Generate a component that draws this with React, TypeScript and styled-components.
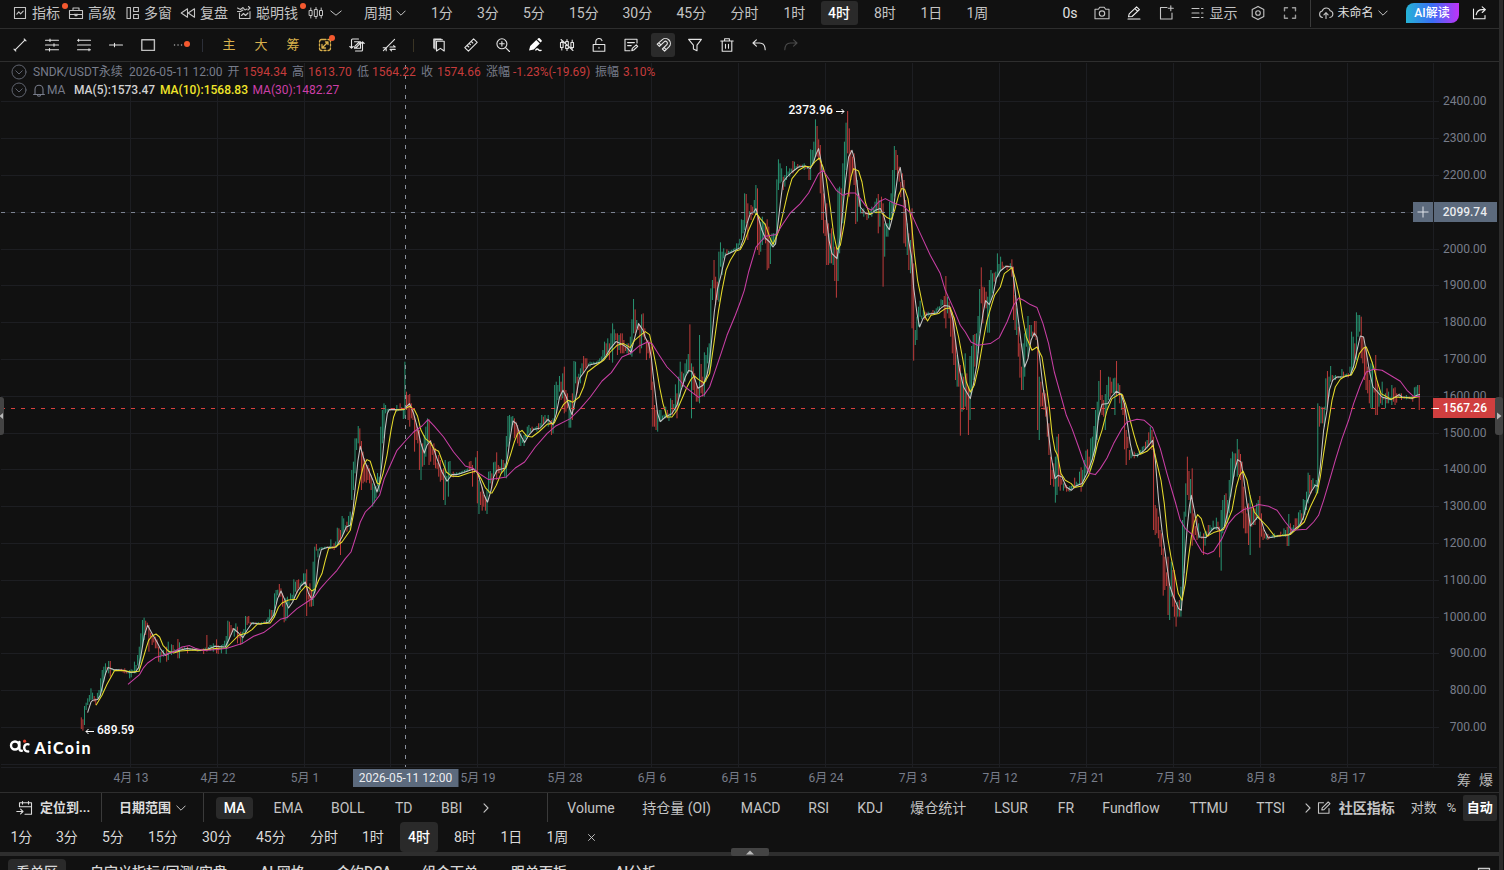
import React from 'react';
import styled, { createGlobalStyle } from 'styled-components';

const GlobalStyle = createGlobalStyle`
  * { box-sizing: border-box; }
  html, body { margin: 0; background: #111111; overflow: hidden; }
  body { font-family: Roboto, "Noto Sans CJK SC", sans-serif; font-size: 14px; color: #c9c9c9; }
`;

/* ---------- layout parts ---------- */

const Shell = styled.div`
  width: 1504px;
  height: 870px;
  display: flex;
  overflow: hidden;
  position: relative;
`;
const Main = styled.main`
  width: 1499px;
  display: flex;
  flex-direction: column;
  overflow: hidden;
`;
const SideRail = styled.div`
  width: 4px;
  background: #2c2c2c;
`;
const Bar = styled.div<{ $h: number; $line?: boolean; $lift?: number }>`
  height: ${(p) => p.$h}px;
  padding-bottom: ${(p) => p.$lift ?? 0}px;
  flex: none;
  display: flex;
  align-items: center;
  border-bottom: ${(p) => (p.$line ? '1px solid #2e2e2e' : 'none')};
  white-space: nowrap;
`;
const Cell = styled.div<{ $w: number; $bold?: boolean; $size?: number; $color?: string }>`
  width: ${(p) => p.$w}px;
  flex: none;
  display: flex;
  align-items: center;
  position: relative;
  font-size: ${(p) => p.$size ?? 14}px;
  font-weight: ${(p) => (p.$bold ? 700 : 400)};
  color: ${(p) => p.$color ?? '#c4c4c4'};
  line-height: 20px;
`;
const Pill = styled.div<{ $w: number; $h: number; $r?: number }>`
  width: ${(p) => p.$w}px;
  height: ${(p) => p.$h}px;
  flex: none;
  display: flex;
  align-items: center;
  justify-content: center;
  line-height: 20px;
  border-radius: ${(p) => p.$r ?? 4}px;
  background: #2a2a2a;
  color: #ffffff;
  font-weight: 500;
`;
const Spacer = styled.div<{ $w: number }>`
  width: ${(p) => p.$w}px;
  flex: none;
`;
const Divider = styled.div<{ $h: number; $color?: string }>`
  width: 1px;
  height: ${(p) => p.$h}px;
  flex: none;
  background: ${(p) => p.$color ?? '#3a3a3a'};
`;
const Tool = styled.button<{ $active?: boolean; $color?: string }>`
  width: 24px;
  height: 24px;
  margin: 0 4px;
  padding: 0;
  border: 0;
  border-radius: 3px;
  flex: none;
  display: flex;
  align-items: center;
  justify-content: center;
  position: relative;
  font: 400 13px/18px "Noto Sans CJK SC", sans-serif;
  background: ${(p) => (p.$active ? '#2b2b2b' : 'transparent')};
  color: ${(p) => p.$color ?? '#e4e4e4'};
`;
const ToolGlyph = styled.span`
  padding-bottom: 2px;
`;
const Dot = styled.i<{ $x: number; $y: number }>`
  position: absolute;
  left: ${(p) => p.$x}px;
  top: ${(p) => p.$y}px;
  width: 6px;
  height: 6px;
  border-radius: 50%;
  background: #f4592f;
`;
const AiButton = styled.button`
  width: 53px;
  height: 20px;
  border: 0;
  padding: 0;
  flex: none;
  border-radius: 8px 0 8px 0;
  background: linear-gradient(90deg, #25b3d6, #3b6df5 50%, #c033f8);
  color: #fff;
  font: 500 12px Roboto, "Noto Sans CJK SC", sans-serif;
  line-height: 20px;
`;
const ChartArea = styled.section`
  height: 731px;
  flex: none;
  position: relative;
  border-bottom: 1px solid #2e2e2e;
`;
const Legend = styled.div`
  position: absolute;
  left: 11px;
  top: 1px;
  font-size: 12px;
  color: #777c8a;
`;
const LegendRow = styled.div`
  height: 18px;
  display: flex;
  align-items: center;
  white-space: nowrap;
`;
const LegendCell = styled.span<{ $w: number; $color?: string; $weight?: number }>`
  width: ${(p) => p.$w}px;
  height: 18px;
  line-height: 18px;
  flex: none;
  display: flex;
  align-items: center;
  color: ${(p) => p.$color ?? 'inherit'};
  font-weight: ${(p) => p.$weight ?? 400};
`;
const CornerTags = styled.div`
  position: absolute;
  left: 1457px;
  top: 708px;
  display: flex;
  gap: 8px;
  font-size: 14px;
  line-height: 20px;
  color: #b9b9b9;
`;
const Splitter = styled.div`
  height: 4px;
  flex: none;
  background: #2e2e2e;
`;
const BottomTabs = styled.div`
  height: 14px;
  flex: none;
  display: flex;
  align-items: flex-start;
  overflow: hidden;
  padding: 3px 0 0 8px;
  white-space: nowrap;
  font-weight: 500;
`;
const BottomTab = styled.div<{ $w: number; $on?: boolean }>`
  width: ${(p) => p.$w}px;
  height: 26px;
  line-height: 26px;
  flex: none;
  border-radius: 4px;
  padding-left: ${(p) => (p.$on ? 8 : 7)}px;
  color: #d6d6d6;
  background: ${(p) => (p.$on ? '#2a2a2a' : 'transparent')};
`;
const Handle = styled.div<{ $x: number; $y: number; $w: number; $h: number; $r: string }>`
  position: absolute;
  left: ${(p) => p.$x}px;
  top: ${(p) => p.$y}px;
  width: ${(p) => p.$w}px;
  height: ${(p) => p.$h}px;
  border-radius: ${(p) => p.$r};
  background: #444444;
  display: flex;
  align-items: center;
  justify-content: center;
  overflow: hidden;
`;

/* ---------- icons ---------- */

type IconProps = { d: string; w?: number; h?: number; color?: string; sw?: number; fill?: string; children?: React.ReactNode };
const Icon = ({ d, w = 16, h = 16, color = 'currentColor', sw = 1.1, fill = 'none', children }: IconProps) => (
  <svg width={w} height={h} viewBox={`0 0 ${w} ${h}`} fill={fill} stroke={color} strokeWidth={sw} strokeLinecap="round" strokeLinejoin="round">
    <path d={d} />
    {children}
  </svg>
);
const Chevron = ({ w = 10 }: { w?: number }) => <Icon w={w} h={10} sw={1} d={`M.8 3 L${w / 2} 7.2 L${w - 0.8} 3`} />;
const ChevronRight = () => <Icon w={8} h={12} d="M2 1.8 6 6 2 10.2" />;

const ICON = {
  indicator: 'M2.5 2.5h11v11h-11zM4.8 9.2 6.8 6.8 8.6 8.8 11.2 6.2',
  advanced: 'M1.5 5.5h13v8h-13zM1.5 9.5h13M5 5.5v-2.5h6v2.5M7 9v1.6h2V9',
  windows: 'M2 2.5h3.4v11H2zM8.6 2.5h4.8v4H8.6zM8.6 9.5h4.8v4H8.6z',
  rewind: 'M7.5 3.8v8.4L1.2 8zM14.5 3.8v8.4L8.2 8z',
  smart: 'M3.5 8v5.5h10.5V6.5M1.5 3l3 1.500L7 2.5 9 5 11 4M1.5 6.5h3L7 5M12.5 1.5l1.500 1.500-2 2M5.5 10.5l2-2 2 2 2.500-2.500',
  candles: 'M1.5 5.5h2.6v5H1.5zM2.8 3v2.5M2.8 10.5V13M6.7 4.5h2.6v7H6.7zM8 2.5v2M8 11.5v2M11.9 5.5h2.6v5h-2.6zM13.2 3v2.5M13.2 10.5V13',
  camera: 'M1 4.2h3.4L5.8 2.2h4.4l1.4 2H15v9.6H1z',
  pencil: 'M2 14h12M2.5 11.8 3.2 8.8 10.6 1.9 13.4 4.6 6 11.5zM9 3.6 11.6 6.2',
  newWindow: 'M9 2.5H2.5v11.5h11.5V8M12.8.8v5M10.3 3.3h5',
  list: 'M2 3.5h7M2 8h7M2 12.5h7M11.5 3.5h1.5M11.5 8h1.5M11.5 12.5h1.5',
  hexagon: 'M8 1.4 13.8 4.6v6.8L8 14.6 2.2 11.4V4.6z',
  expand: 'M2.5 5.8V2.8h3M10.5 2.8h3v3M13.5 10.2v3h-3M5.5 13.2h-3v-3',
  cloud: 'M4.5 12.5a3.3 3.3 0 0 1-.3-6.5 4.2 4.2 0 0 1 8-.2 3.4 3.4 0 0 1-.4 6.7M8 13.5V8M5.9 9.8 8 7.6l2.1 2.2',
  share: 'M2.5 4v9.8h11.5V10.5M5.2 9.6c.8-3.6 3-5 6-5h3M11.2 1.8 14.4 4.6 11.2 7.5',
  segment: 'M3.4 12.6 12.6 3.4M2 12.2 3.8 14M12.2 2 14 3.8',
  lines3: 'M1.5 3.2h13M1.5 8h13M1.5 12.8h13M6 2v2.4M10 6.8v2.4M5.5 11.6V14',
  lines3b: 'M1.5 3.2h13M1.5 8h13M1.5 12.8h13M2.6 2.2v2M13 11.8v2',
  hline: 'M1.5 8h13M6.500 6.200v3.600',
  rect: 'M1.8 2.8h12.6v10.6H1.8z',
  gauge: 'M5 2.5h4M11 2.500h.5q2 0 2 2V5M13.500 7v2M13.500 11q0 2.500-2.500 2.500M9 13.500H7M5 13.500h-.500q-2 0-2-2V11M2.500 9V7M2.500 5q0-2.500 2-2.500M5.500 10.500l5-5M5 7.500v3.500h3.500M8.500 5H11v2.500',
  cycle: 'M9.500 2H3.500q-1 0-1 1v8M.8 9.500 2.500 11.200 4.200 9.500M6.500 14h6q1 0 1-1V5M15.200 6.500 13.500 4.800 11.800 6.500M5.500 4.800h6v6.400h-6M5.500 11.200 6 9.200 9.800 5.500l1.200 1.200-3.800 3.800z',
  slashes: 'M2.4 13.6 13.6 2.4M2.2 10.8h3v3M9 10h5.2l-1.6-1.4M14.2 12.4H9l1.6 1.4',
  bookmark: 'M5.5 4.2h7.7v9.8l-3.8-2.6L5.5 14zM4 12V2.8h7.5M2.8 11V2h7.2',
  ruler: 'M1.8 10.6 10.6 1.8l3.6 3.6-8.8 8.8zM4.2 8.4l1.6 1.6M6.2 6.4 7.4 7.6M8.2 4.4l1.6 1.6',
  zoom: 'M10.8 10.8 14.5 14.5M4.6 6.8h4.6M6.9 4.5v4.6',
  lock: 'M2.2 7.5h11.6v6.8H2.2zM4.8 7.5V4.6a3.2 3.2 0 0 1 6.2-1M8 10.4v.8',
  note: 'M7 13.8H2V2.2h12V6M4.6 5.6h6.8M4.6 8.6h3.6M8.8 13.6l.5-2.2 4-3.6 1.4 1.5-3.9 3.7z',
  magnet: 'M2.2 7.2 7.4 2.6a4.9 4.9 0 0 1 6.8 7L9.6 14.2 7.4 12l4.4-4.4a1.9 1.9 0 0 0-2.7-2.8L4.4 9.4zM9 10.4l2.2 2.2M3.8 5.8 6 8',
  funnel: 'M1.6 2.4h12.8L10 8.2v5.6l-3.6-1.8V8.2z',
  trash: 'M1.8 4h12.4M3.2 4v10.2h9.6V4M5.6 3.8V1.8h4.8v2M6.5 7.2v4M9.5 7.2v4',
  undo: 'M5.4 2.8 2 6l3.4 3.2M2.2 6h6.4c3 0 5.4 2 5.6 6.8',
  redo: 'M10.6 2.8 14 6l-3.4 3.2M13.8 6H7.4c-3 0-5.4 2-5.6 6.8',
  calendar: 'M3.5 6V2.8h12v11.5H9M3.5 6.8h12M6.5 1.5v2.6M12.5 1.5v2.6M.8 11.5h6M4.6 9.2 7 11.5 4.6 13.8',
  edit: 'M7.5 2.8H2.5v10.5H13V8.5M5.8 10l.4-2.2 6-5.8 1.8 1.7-6 5.9z',
  bell: 'M.6 10.500h10.800M2 10.300V5.300a4 4 0 0 1 8 0v5M4.500 11.700c.7.800 2.300.800 3 0',
};

/* ---------- chart data ---------- */

type Block = { x: number; y: number; ma5: string; ma10: string; ma30: string; bars: string };

// Points are thirds of a pixel, relative to each block's origin on the page.
const BLOCKS: Block[] = [
  {
    x: 60, y: 380,
    ma5: '82 997 92 965 97 960 112 958 120 945 128 910 136 880 143 862 160 868 190 870 210 877 225 876 235 862 243 820 252 765 262 735 275 760 290 785 300 805 315 825 335 815 350 812 380 805 420 810 440 808 465 798 495 800 505 780 520 745 535 758 548 772 560 750 575 728 600 731 625 726 640 705 652 655 662 632 672 655 685 683 697 665 710 635 722 617 735 605 745 640 755 658 765 630 775 540 783 508 800 502 828 500 845 470 858 440 870 435 878 390 885 320 893 240 900 198 912 240 925 270 938 300 950 335 958 310 966 240 974 150 981 100 987 88 1030 88 1048 70 1060 100 1072 145 1082 190 1092 218 1100 195 1110 182 1120 205 1132 240 1145 275 1160 303 1175 283 1190 283 1210 277 1240 266 1252 278 1262 310 1272 345 1281 365',
    ma10: '107 975 115 962 125 945 140 912 155 885 163 871 190 871 213 875 236 873 245 845 255 812 265 780 275 767 287 761 298 770 308 795 325 813 340 818 360 812 390 810 430 810 465 805 497 803 515 785 535 765 560 758 575 748 592 731 630 728 642 710 655 680 665 668 685 659 708 657 720 635 735 618 745 622 755 632 765 625 775 600 785 580 795 540 805 505 825 500 845 485 870 450 880 400 890 345 900 295 910 255 920 238 930 243 940 275 950 308 958 312 968 280 980 225 992 150 1000 110 1008 89 1030 88 1048 78 1062 88 1072 108 1082 150 1095 175 1110 187 1120 205 1135 213 1145 240 1158 275 1175 288 1195 289 1225 278 1248 272 1262 295 1275 322 1290 338',
    ma30: '203 912 220 898 238 883 250 862 262 848 285 832 310 825 340 815 365 800 388 796 405 804 430 811 470 808 500 804 545 790 580 768 610 757 635 738 660 717 680 712 710 685 740 665 762 650 780 625 800 602 830 570 855 535 872 515 885 475 900 425 915 395 935 375 958 345 972 295 990 255 1010 210 1035 182 1060 155 1085 137 1103 118 1120 135 1150 170 1180 215 1215 257 1240 265',
    bars: '63 1012 1047 r 68 1018 1052 r 73 978 1035 g 78 968 990 g 83 955 975 g 87 945 965 g 92 925 960 g 97 938 958 g 102 948 965 r 108 955 975 r 117 930 958 g 122 895 950 g 127 870 935 g 132 860 905 g 136 850 885 g 145 843 880 g 150 843 890 r 193 865 880 r 208 870 895 g 213 868 892 g 222 845 880 g 228 855 880 g 236 800 875 g 241 760 850 g 246 720 800 g 251 713 780 g 256 722 765 r 262 728 740 r 266 735 815 r 275 760 795 r 285 770 805 r 290 778 805 r 296 800 845 r 300 815 848 g 310 810 830 g 319 800 845 r 324 785 840 g 332 793 825 g 338 795 815 r 352 777 835 r 357 787 835 g 380 800 820 r 439 765 815 r 430 805 822 r 451 795 812 g 460 790 815 g 469 778 820 r 475 795 822 r 483 795 820 g 498 768 822 g 503 722 800 g 508 725 775 r 513 735 765 r 520 745 770 g 527 730 755 g 532 740 790 r 540 755 795 r 546 755 790 g 557 708 765 g 562 710 735 r 567 708 730 r 628 688 730 g 633 690 722 r 638 690 715 g 643 640 712 g 648 630 670 g 656 612 650 r 661 625 650 r 666 640 680 r 672 660 727 r 677 655 722 g 682 650 715 g 692 640 660 g 700 598 655 g 705 605 635 g 710 600 640 r 715 598 625 r 722 610 630 g 730 580 610 g 735 580 620 g 740 568 708 r 747 610 680 r 754 630 680 r 759 545 678 g 764 500 640 g 769 492 512 r 812 478 505 g 820 490 510 r 830 443 495 g 835 445 490 r 841 450 525 r 847 408 470 g 852 415 460 g 858 425 455 r 868 395 450 g 873 330 440 g 876 270 360 g 881 245 330 g 885 175 280 g 890 175 210 g 895 138 190 g 899 145 210 r 904 183 330 r 908 215 310 r 914 235 305 r 919 255 308 r 924 255 300 r 929 265 310 r 934 285 330 r 938 310 380 g 943 320 370 g 948 318 355 g 955 290 335 g 959 240 330 g 963 140 270 g 967 90 190 g 972 70 175 g 977 75 100 g 1010 75 95 g 1020 70 92 r 1030 85 117 g 1034 -55 115 g 1039 35 90 r 1043 45 120 r 1048 42 140 r 1053 70 115 r 1058 85 120 r 1063 110 215 r 1068 130 180 r 1073 145 190 r 1078 150 270 r 1083 190 300 g 1088 190 260 r 1093 165 255 g 1098 140 230 g 1103 115 190 g 1108 118 255 r 1113 180 245 r 1120 190 255 r 1127 205 265 r 1134 225 290 r 1140 240 305 r 1147 270 300 r 1151 265 360 r 1156 240 375 g 1163 245 350 g 1169 243 290 g 1180 275 292 r 1227 245 270 r 1232 243 268 r 1238 255 320 r 1246 232 270 g 1252 213 370 r 1257 300 402 g 1262 335 375 r 1267 320 392 r 1272 345 380 r 1277 350 392 r 1281 330 402 g',
  },
  {
    x: 480, y: 200,
    ma5: '22 905 32 870 40 830 50 810 75 803 82 770 90 710 98 662 108 670 118 700 133 727 145 705 160 688 180 683 203 657 218 673 228 640 238 590 248 570 258 590 268 625 275 643 285 600 297 535 315 510 325 495 360 486 375 470 390 445 407 424 425 432 440 442 452 456 465 405 475 370 488 390 495 412 505 430 513 470 518 520 525 580 532 640 540 664 555 650 575 640 590 615 602 570 615 530 625 511 635 514 645 540 653 564 668 555 680 525 688 480 695 410 702 335 712 265 722 225 735 165 760 153 780 142',
    ma10: '35 878 48 855 62 820 78 800 90 765 102 725 112 700 125 690 140 708 155 710 175 695 200 672 222 668 235 640 250 612 263 600 277 606 297 590 310 560 322 515 345 497 370 480 390 455 410 435 430 430 450 442 463 420 480 405 495 394 508 403 518 450 528 500 538 560 548 610 560 650 575 650 590 630 603 600 620 560 632 537 642 527 655 538 672 548 688 520 695 470 705 400 715 330 725 270 737 210 750 180 767 152 780 148',
    ma30: '0 822 25 838 50 835 78 830 105 803 133 785 165 740 200 700 225 678 270 655 300 625 330 590 365 542 393 517 425 470 452 458 475 438 500 426 515 430 535 462 560 500 590 530 615 560 640 580 655 591 672 583 688 560 705 510 722 460 740 405 765 345 780 305',
    bars: '26 815 880 g 31 813 850 g 36 820 865 r 41 787 840 g 46 785 820 g 50 757 840 r 55 795 820 r 60 800 820 r 65 778 820 g 70 780 815 r 75 790 830 g 79 708 835 g 84 648 740 g 89 645 720 g 94 650 690 g 98 648 675 g 102 655 715 r 107 665 710 r 112 675 730 r 118 690 738 r 123 700 738 g 130 705 738 g 142 680 715 g 147 675 700 g 153 680 695 r 168 678 695 g 175 670 690 r 185 645 680 g 190 650 675 r 196 645 670 g 206 645 680 g 211 655 690 r 215 660 705 r 219 655 700 g 224 555 665 g 228 545 640 g 233 555 600 g 238 528 575 g 243 545 600 r 248 520 595 g 253 500 640 r 258 570 635 r 263 580 625 r 268 600 683 g 273 600 683 g 278 580 660 r 283 483 630 g 287 485 550 g 292 530 580 r 300 505 550 g 305 490 520 g 311 468 520 r 316 475 505 r 321 475 505 r 330 485 500 g 368 450 480 g 373 425 475 g 378 430 465 r 383 415 465 g 388 430 480 r 393 400 450 g 398 370 488 g 403 388 430 g 408 400 420 r 413 400 465 r 418 405 450 g 423 400 460 r 428 400 460 r 433 420 460 r 440 430 460 g 445 430 465 r 452 410 465 g 456 358 470 g 461 297 400 g 466 328 400 r 471 360 385 g 476 370 390 r 480 375 460 r 485 343 445 g 490 340 410 r 495 385 420 r 500 420 480 r 505 420 460 r 510 425 475 r 514 440 570 r 519 545 680 r 524 615 680 r 529 630 690 r 534 640 695 g 539 630 665 g 544 630 665 g 555 620 655 g 560 630 655 r 567 640 663 g 572 595 650 g 577 600 645 r 586 553 635 g 591 580 655 r 596 530 620 g 601 485 590 g 606 515 560 r 611 520 560 g 616 490 545 g 621 478 520 g 626 462 520 g 630 373 515 r 635 490 655 g 640 500 570 r 645 520 585 r 650 550 605 r 655 560 605 r 658 405 610 g 664 492 580 r 669 530 590 r 674 457 590 g 679 465 545 g 685 430 520 g 690 265 500 g 697 240 300 g 702 180 265 r 707 230 315 r 712 245 300 r 716 155 305 g 721 127 200 g 726 155 225 g 732 145 175 g 738 148 165 r 770 130 150 g',
  },
  {
    x: 740, y: 90,
    ma5: '10 445 20 400 30 370 40 366 47 355 55 385 65 420 75 443 88 455 98 470 106 460 112 410 120 340 128 275 140 260 155 245 175 230 195 227 210 235 220 215 228 190 235 175 243 215 250 290 258 380 266 450 275 490 290 505 300 440 308 350 316 270 325 200 335 180 342 205 350 280 360 350 375 368 390 373 405 360 420 355 430 375 438 405 447 418 457 380 465 310 473 250 480 232 488 290 497 370 505 450 514 500 520 590 530 670 538 710 548 685 560 672 590 668',
    ma10: '12 455 25 420 38 390 48 368 60 385 75 403 90 445 98 462 106 445 116 420 128 370 142 310 155 265 175 240 195 228 212 230 225 213 237 203 248 230 258 265 270 350 280 430 290 478 300 465 312 400 322 325 332 260 340 235 355 242 365 275 375 335 388 372 400 367 422 365 440 382 453 388 463 360 475 315 484 295 493 297 503 325 514 400 522 490 532 570 545 635 555 680 562 692 572 675 595 670',
    ma30: '12 600 25 545 47 470 75 438 108 433 125 405 150 368 180 340 205 308 235 250 248 240 262 260 288 300 308 315 325 308 345 308 358 322 380 352 393 360 415 335 435 325 460 338 490 348 513 370 540 430 570 495 600 550',
    bars: '5 388 450 g 10 390 430 g 15 310 420 g 20 312 400 r 25 340 450 r 30 345 390 r 36 350 375 r 42 330 370 g 47 285 375 g 52 295 480 r 57 380 495 r 62 395 485 g 67 380 465 g 72 395 450 g 77 400 460 r 82 388 540 r 87 410 535 r 92 445 522 g 97 430 470 g 103 430 465 g 110 268 440 g 115 208 300 g 120 220 280 g 125 235 275 g 130 260 300 r 135 255 290 g 140 228 270 g 150 235 260 g 160 213 250 r 165 215 240 g 172 222 235 r 190 220 240 g 207 235 270 r 212 178 270 g 217 180 225 g 222 155 220 g 227 88 200 g 232 108 200 r 237 148 210 r 242 165 310 r 247 250 390 r 252 310 430 r 257 340 525 r 262 400 525 r 267 430 520 g 272 415 520 r 277 425 525 g 284 470 573 r 290 480 623 r 294 295 573 g 299 290 490 g 304 295 440 r 309 220 400 g 314 155 310 g 319 98 240 g 324 63 190 r 329 115 320 r 334 180 270 r 339 190 285 r 344 190 350 r 348 240 402 r 353 270 395 g 358 310 350 r 363 330 370 g 370 355 380 g 378 365 390 r 385 365 385 g 395 350 380 g 405 335 370 g 410 325 370 g 415 312 430 r 420 330 410 g 425 320 370 r 430 340 590 r 434 400 500 g 440 400 440 g 445 400 440 g 450 335 420 g 454 310 390 g 459 240 380 g 464 168 320 g 469 180 240 r 474 195 260 r 479 230 275 r 484 250 290 r 489 270 460 r 494 330 470 r 499 400 495 g 504 430 540 r 509 450 550 g 517 355 715 r 521 520 812 r 526 720 765 g 531 680 750 g 536 650 710 g 541 632 680 g 547 660 680 g 553 665 690 r 565 665 680 g 580 660 672 r 590 655 670 g',
  },
  {
    x: 940, y: 240,
    ma5: '0 205 12 196 28 198 38 240 48 320 58 390 70 440 90 475 100 430 110 370 118 290 128 220 136 181 147 193 158 165 168 115 180 92 197 78 215 80 222 130 232 220 243 310 253 380 263 355 272 300 282 278 290 290 298 350 307 430 318 510 325 580 333 650 344 715 353 705 365 710 378 740 393 750 405 738 425 730 440 700 455 660 465 620 475 530 485 492 503 490 513 470 528 453 542 462 552 490 560 540 570 610 578 645 592 646 610 632 625 615 637 600 645 660 655 780 665 870 675 940 688 1035 700 1070 715 1105 723 1110',
    ma10: '0 215 15 205 30 203 42 235 55 290 68 360 78 425 90 455 102 435 115 380 127 310 140 240 155 190 163 165 180 140 192 100 215 82 225 115 237 165 247 230 258 290 275 330 290 320 305 350 316 420 327 500 335 580 344 630 352 645 362 700 375 720 393 730 402 742 425 737 445 705 460 660 472 610 485 570 500 510 515 475 535 463 545 462 556 490 567 530 580 580 590 615 600 642 620 633 638 615 648 660 662 720 672 790 682 890 692 950 703 1000 714 1060 725 1080',
    ma30: '15 150 40 205 60 255 75 275 92 305 112 315 150 310 177 292 200 245 220 195 235 173 250 180 270 193 290 202 308 250 325 310 342 395 360 460 378 525 395 565 415 620 432 670 450 700 465 703 480 685 500 653 520 610 545 565 560 545 590 537 612 540 637 562 660 625 680 700 705 785 720 840',
    bars: '3 178 200 g 8 180 195 g 12 168 235 r 17 108 265 r 22 170 220 g 27 185 235 r 32 200 290 r 37 215 340 r 42 230 375 r 47 300 420 r 52 345 440 g 57 370 440 r 62 375 587 r 67 400 515 g 72 410 510 r 76 340 500 g 81 400 510 r 86 440 585 r 91 348 540 g 96 318 460 g 101 285 420 g 106 282 380 r 110 280 385 g 115 228 340 g 120 147 280 g 124 82 190 r 129 140 250 r 134 142 200 r 139 155 205 r 144 170 278 g 148 120 278 g 153 90 180 g 158 100 160 g 163 98 125 r 168 95 130 g 173 40 110 g 178 72 110 g 183 50 95 g 188 65 90 r 200 75 90 r 212 70 85 g 216 58 110 r 221 80 240 r 226 165 270 r 231 205 285 g 236 260 350 r 241 310 413 r 245 380 450 r 250 310 450 g 255 280 410 g 260 265 320 g 265 228 350 g 270 255 310 r 275 255 290 g 280 243 290 r 285 243 300 r 290 275 350 r 294 300 570 r 299 410 600 g 304 425 500 r 309 450 510 r 314 460 530 r 319 500 590 r 324 550 645 r 329 620 695 r 333 650 735 r 338 670 740 r 343 700 782 r 347 650 788 g 352 590 765 g 356 582 740 r 362 690 752 r 367 730 752 g 373 730 745 r 380 735 755 r 390 738 755 g 403 713 745 r 410 725 742 g 418 695 735 g 424 682 755 r 429 690 740 g 434 660 720 g 439 632 700 g 443 628 700 r 448 650 700 r 453 595 690 g 458 590 660 g 463 558 650 g 467 510 640 g 472 485 600 g 477 423 540 g 482 390 480 r 487 465 525 r 492 480 530 r 497 462 570 g 502 435 510 g 506 410 480 g 511 412 470 r 516 425 460 r 520 415 460 g 525 413 525 g 530 363 470 r 535 430 460 g 540 435 490 r 545 460 510 g 550 465 525 r 555 490 628 r 560 570 675 r 565 630 660 r 570 628 655 g 580 635 655 r 590 640 652 g 605 620 640 g 615 605 630 r 620 600 625 g 626 577 620 r 632 560 610 g 636 570 630 r 641 590 870 r 646 795 885 r 651 805 880 r 656 830 895 r 661 870 920 r 666 880 945 r 671 925 1067 r 676 950 1050 r 681 1000 1098 g 685 950 1125 r 689 1040 1140 g 694 965 1070 g 699 990 1100 r 704 990 1130 r 709 1095 1160 r 714 1085 1130 g 719 1080 1130 r 724 1040 1130 g',
  },
  {
    x: 1180, y: 280,
    ma5: '8 925 14 830 20 750 27 680 33 645 42 690 50 740 57 770 77 772 90 755 100 744 113 742 120 752 132 740 143 690 155 620 163 570 172 538 182 545 190 590 200 670 210 737 220 725 232 710 243 720 252 750 264 773 290 768 325 764 345 745 358 735 370 710 380 665 392 635 405 615 412 618 420 560 430 450 440 390 447 330 457 300 470 290 490 290 510 284 520 258 530 210 540 167 550 170 558 215 568 275 578 320 592 335 605 350 620 355 632 358 645 350 656 343 665 350 680 352 697 354 707 346 719 343',
    ma10: '15 910 25 830 33 770 42 725 52 703 63 715 72 745 80 768 100 757 130 748 142 722 155 690 168 620 178 585 188 572 200 600 210 650 222 695 240 717 262 740 283 768 330 763 350 745 372 725 390 680 411 637 420 590 430 520 442 445 455 360 465 320 480 297 495 287 513 284 525 262 537 220 550 203 558 200 570 230 580 260 590 300 602 340 615 347 632 357 645 350 665 352 695 353 719 349',
    ma30: '15 745 35 762 50 790 65 815 82 821 100 813 125 775 145 730 165 706 190 688 215 682 235 673 265 678 290 690 315 725 335 750 378 747 400 725 415 705 430 660 445 610 465 540 485 475 505 420 520 370 540 315 558 275 580 267 605 270 635 288 660 303 680 330 700 348 719 349',
    bars: '8 720 960 g 13 695 880 g 18 610 710 g 23 530 645 r 27 573 660 r 32 597 700 g 37 565 797 r 42 700 780 r 48 715 780 r 55 730 775 g 62 755 770 g 70 760 825 r 76 755 797 g 83 735 770 r 88 735 765 g 100 722 750 g 108 713 750 g 113 725 755 r 118 740 832 r 124 690 872 g 128 660 760 g 133 645 740 g 138 640 745 r 143 660 730 g 148 600 700 g 153 535 650 g 158 515 610 g 163 520 590 g 167 520 560 r 172 477 590 g 177 508 585 r 182 522 600 r 187 545 700 r 192 620 745 r 197 680 760 r 201 700 760 r 206 670 795 r 211 645 825 g 216 680 740 r 221 690 735 g 226 685 735 r 231 670 720 g 236 660 715 g 240 648 803 r 245 700 770 r 250 745 780 r 258 760 778 g 264 762 780 r 280 760 775 g 300 755 770 r 310 745 770 g 318 750 770 g 322 740 798 r 327 702 798 g 332 730 765 r 338 735 755 g 345 715 750 r 350 715 745 r 355 697 745 g 360 690 740 g 365 700 735 r 370 657 720 g 375 660 705 g 380 635 690 g 385 578 670 g 390 585 640 r 395 600 640 r 400 595 625 g 406 605 640 r 410 600 640 g 414 370 640 g 419 378 440 r 424 380 430 g 429 382 430 r 434 380 440 g 438 295 390 g 443 273 380 r 448 290 350 g 453 258 305 g 458 285 305 r 465 285 300 g 486 267 290 g 492 275 290 r 505 280 292 r 515 155 285 g 520 170 265 g 525 190 245 r 530 97 240 g 535 105 170 g 540 105 155 g 545 110 235 r 550 170 250 r 554 200 300 r 559 200 330 r 564 260 340 r 569 300 370 r 574 250 385 g 579 245 385 g 584 245 350 r 588 225 405 r 593 310 405 r 598 330 380 g 603 340 370 r 608 305 375 g 613 340 385 g 618 312 425 g 622 325 370 r 627 335 370 g 635 315 375 g 641 325 365 r 646 322 375 r 651 340 368 r 660 340 355 g 666 340 360 r 680 345 358 g 695 345 365 r 704 322 355 g 709 320 350 g 714 315 345 g 718 315 390 r',
  },
];

const CHART_TOP = 62;
const BAR_STEP = 1.61;
const FIRST_BAR = 81.3;
const UP = '#2aa17c';
const DOWN = '#d2403f';

type Pt = [number, number];
const linePoints = (key: 'ma5' | 'ma10' | 'ma30'): Pt[] =>
  BLOCKS.flatMap((b) => {
    const n = b[key].split(' ').map(Number);
    const out: Pt[] = [];
    for (let i = 0; i < n.length; i += 2) out.push([b.x + n[i] / 3 + 0.3, b.y + n[i + 1] / 3 - CHART_TOP + 0.3]);
    return out;
  });
const toPath = (pts: Pt[]) => pts.map(([x, y], i) => `${i ? 'L' : 'M'}${x.toFixed(1)} ${y.toFixed(1)}`).join('');

const MA5 = linePoints('ma5');
const MA10 = linePoints('ma10');
const MA30 = linePoints('ma30');

const valueAt = (pts: Pt[], x: number) => {
  for (let i = 1; i < pts.length; i++) {
    if (x <= pts[i][0]) {
      const [ax, ay] = pts[i - 1];
      const [bx, by] = pts[i];
      return ay + ((by - ay) * Math.max(0, x - ax)) / Math.max(0.01, bx - ax);
    }
  }
  return pts[pts.length - 1][1];
};

type Candle = { x: number; top: number; bottom: number; up: boolean };
const snap = (x: number) => Math.round((x - FIRST_BAR) / BAR_STEP);

const CANDLES: Candle[] = (() => {
  const byIndex = new Map<number, Candle>();
  BLOCKS.forEach((b) => {
    const t = b.bars.split(' ');
    for (let i = 0; i < t.length; i += 4) {
      const idx = snap(b.x + Number(t[i]) / 3 + 0.3);
      byIndex.set(idx, {
        x: FIRST_BAR + idx * BAR_STEP,
        top: b.y + Number(t[i + 1]) / 3 - CHART_TOP,
        bottom: b.y + Number(t[i + 2]) / 3 - CHART_TOP,
        up: t[i + 3] === 'g',
      });
    }
  });
  // Quiet bars follow the short average two periods ahead.
  for (let i = 4; FIRST_BAR + i * BAR_STEP < 1419; i++) {
    if (byIndex.has(i)) continue;
    const x = FIRST_BAR + i * BAR_STEP;
    const open = valueAt(MA5, x + 1.6);
    const close = valueAt(MA5, x + 3.2);
    const wob = ((i * 7919) % 13) / 13;
    const flat = Math.abs(open - close) < 0.4;
    byIndex.set(i, {
      x,
      top: Math.min(open, close) - 0.6 - wob,
      bottom: Math.max(open, close) + 0.4 + (1 - wob),
      up: flat ? i % 3 !== 0 : close < open,
    });
  }
  return [...byIndex.values()];
})();

const GRID_X = [130, 217, 304, 390, 477, 564, 651, 738, 825, 912, 999, 1086, 1173, 1260, 1347];
const GRID_Y = [101, 138, 175, 212, 249, 285, 322, 359, 396, 433, 469, 506, 543, 580, 617, 653, 690, 727, 764];
const DATES = ['4月 13', '4月 22', '5月 1', '', '5月 19', '5月 28', '6月 6', '6月 15', '6月 24', '7月 3', '7月 12', '7月 21', '7月 30', '8月 8', '8月 17'];
const PRICES = GRID_Y.map((y, i) => ({ label: (2400 - i * 100).toFixed(2), y: y - CHART_TOP }));

const AxisText = styled.text`
  font: 400 12px Roboto, "Noto Sans CJK SC", sans-serif;
  fill: #787d8a;
`;
const MarkText = styled.text<{ $bold?: boolean }>`
  font: ${(p) => (p.$bold ? 500 : 400)} 12px Roboto, "Noto Sans CJK SC", sans-serif;
  fill: #ffffff;
`;

const Chart = () => (
  <svg width={1499} height={730} viewBox="0 0 1499 730">
    <g stroke="#1d1e22" strokeWidth={1}>
      {GRID_X.map((x) => <path key={x} d={`M${x + 0.5} 1V705`} />)}
      {PRICES.map((p) => <path key={p.label} d={`M1 ${p.y + 0.5}H1439`} />)}
      <path d="M1433.5 1V705M1 705.5H1497" />
    </g>
    {PRICES.slice(0, 18).map((p, i) => i !== 3 && (
      <AxisText key={p.label} x={1486.6} y={p.y + 4} textAnchor="end">{p.label}</AxisText>
    ))}
    {DATES.map((d, i) => d && (
      <AxisText key={d} x={GRID_X[i] + 1} y={720} textAnchor="middle">{d}</AxisText>
    ))}
    <g>
      {CANDLES.map((c, i) => (
        <rect key={i} x={c.x - 0.5} y={c.top} width={1} height={c.bottom - c.top} fill={c.up ? UP : DOWN} opacity={0.9} />
      ))}
    </g>
    <g fill="none" strokeWidth={1.05} strokeLinejoin="round">
      <path d={toPath(MA5)} stroke="#c6c6c6" />
      <path d={toPath(MA10)} stroke="#e6db2c" />
      <path d={toPath(MA30)} stroke="#c93fa5" />
    </g>
    <path d="M1 150.5H1413" stroke="#7d8492" strokeDasharray="4 6" />
    <path d="M405.5 3V705" stroke="#8b909c" strokeDasharray="4 6" />
    <path d="M1 346.5H1433" stroke="#d8433f" strokeDasharray="4 6" />
    <MarkText x={788.5} y={52} $bold>2373.96</MarkText>
    <path d="M836 49.5h8M841.5 47l2.5 2.5-2.5 2.5" stroke="#fff" fill="none" />
    <MarkText x={97} y={672} $bold>689.59</MarkText>
    <path d="M94 669.5h-8M88.5 667l-2.5 2.5 2.5 2.5" stroke="#fff" fill="none" />
    <rect x={1413} y={140} width={20} height={20} fill="#5c6a7d" />
    <path d="M1423 144.5v11M1417.5 150h11" stroke="#dfe3ea" />
    <rect x={1434} y={140} width={63} height={20} fill="#5c6a7d" />
    <MarkText x={1487} y={154} textAnchor="end" fillOpacity={0.88} $bold>2099.74</MarkText>
    <rect x={1433} y={336} width={63} height={20} fill="#d03f3f" />
    <path d="M1433 346.5h6" stroke="#fff" />
    <MarkText x={1487} y={350} textAnchor="end" $bold>1567.26</MarkText>
    <rect x={353} y={707} width={105.5} height={18} fill="#5c6a7d" />
    <MarkText x={405.5} y={720} textAnchor="middle" fillOpacity={0.9}>2026-05-11 12:00</MarkText>
    <g fill="none" stroke="#fff" strokeWidth={2.4} strokeLinecap="round">
      <circle cx={15} cy={683.5} r={4} />
      <path d="M19.4 680v6.5q0 2.5 2.4 2.3M28.5 682.3c-5.2-1.6-6.2 7.2-.3 7.2" />
    </g>
    <circle cx={24.6} cy={679.2} r={1.6} fill="#e0402f" />
    <text x={34.5} y={691.5} fill="#fff" fontFamily="Lato, sans-serif" fontWeight={900} fontSize={16} textLength={56}>AiCoin</text>
  </svg>
);

const CircleChevron = () => (
  <Icon w={16} h={16} color="#5f636e" sw={1} d="M4.8 6.8 8 10l3.2-3.2"><circle cx={8} cy={8} r={7} /></Icon>
);

const OHLC: [string, number, boolean][] = [
  ['SNDK/USDT永续', 96, false], ['2026-05-11 12:00', 98.5, false],
  ['开', 15.5, false], ['1594.34', 49, true], ['高', 16, false], ['1613.70', 49, true],
  ['低', 15, false], ['1564.22', 49, true], ['收', 16, false], ['1574.66', 49, true],
  ['涨幅', 27, false], ['-1.23%(-19.69)', 82, true], ['振幅', 28, false], ['3.10%', 40, true],
];

const TOP_PERIODS: [string, number][] = [['1分', 46], ['3分', 46], ['5分', 46], ['15分', 53.5], ['30分', 54], ['45分', 54], ['分时', 53], ['1时', 37]];
const ROW_PERIODS: [string, number][] = [['1分', 45.5], ['3分', 46], ['5分', 46], ['15分', 54], ['30分', 54], ['45分', 54], ['分时', 52], ['1时', 38]];
const SUB_INDICATORS: [string, number][] = [['Volume', 75], ['持仓量 (OI)', 98.5], ['MACD', 67.5], ['RSI', 49], ['KDJ', 53], ['爆仓统计', 84], ['LSUR', 63.5], ['FR', 44.5], ['Fundflow', 87.5], ['TTMU', 66.5], ['TTSI', 47.5]];
const BOTTOM_TABS: [string, number][] = [['看单区', 58], ['自定义指标/回测/实盘', 170], ['AI 网格', 76], ['合约DCA', 86], ['组合下单', 89], ['跟单面板', 104], ['AI分析', 120]];

export default function App() {
  return (
    <>
      <GlobalStyle />
      <Shell>
        <Main>
          <Bar $h={29} $line $lift={2}>
            <Spacer $w={12} />
            <Cell $w={20}><Icon d={ICON.indicator} /></Cell>
            <Cell $w={36}>指标<Dot $x={30} $y={0} /></Cell>
            <Cell $w={20}><Icon d={ICON.advanced} /></Cell>
            <Cell $w={37}>高级</Cell>
            <Cell $w={19}><Icon d={ICON.windows} /></Cell>
            <Cell $w={36}>多窗</Cell>
            <Cell $w={20}><Icon d={ICON.rewind} /></Cell>
            <Cell $w={36}>复盘</Cell>
            <Cell $w={20}><Icon d={ICON.smart} /></Cell>
            <Cell $w={52}>聪明钱<Dot $x={44} $y={0} /></Cell>
            <Cell $w={22}><Icon d={ICON.candles} sw={1} /></Cell>
            <Cell $w={34}><Chevron w={12} /></Cell>
            <Cell $w={32}>周期</Cell>
            <Cell $w={35}><Chevron /></Cell>
            {TOP_PERIODS.map(([t, w]) => <Cell key={t} $w={w}>{t}</Cell>)}
            <Pill $w={37} $h={24} $r={3}>4时</Pill>
            <Spacer $w={16.5} />
            <Cell $w={46.5}>8时</Cell>
            <Cell $w={46}>1日</Cell>
            <Cell $w={96}>1周</Cell>
            <Cell $w={31} $color="#e2e2e2">0s</Cell>
            <Cell $w={32}><Icon d={ICON.camera}><circle cx={8} cy={8.6} r={2.7} /></Icon></Cell>
            <Cell $w={32} $color="#efefef"><Icon d={ICON.pencil} /></Cell>
            <Cell $w={32}><Icon d={ICON.newWindow} /></Cell>
            <Cell $w={20}><Icon d={ICON.list} /></Cell>
            <Cell $w={40}>显示</Cell>
            <Cell $w={32}><Icon d={ICON.hexagon}><circle cx={8} cy={8} r={2.3} /></Icon></Cell>
            <Cell $w={28} $color="#9a9a9a"><Icon d={ICON.expand} sw={1.4} /></Cell>
            <Divider $h={28} />
            <Spacer $w={7} />
            <Cell $w={20}><Icon d={ICON.cloud} /></Cell>
            <Cell $w={40} $size={12} $color="#e2e2e2">未命名</Cell>
            <Cell $w={28}><Chevron /></Cell>
            <AiButton>AI解读</AiButton>
            <Spacer $w={12} />
            <Cell $w={16} $color="#efefef"><Icon d={ICON.share} /></Cell>
          </Bar>

          <Bar $h={33} $line>
            <Spacer $w={4} />
            <Tool><Icon d={ICON.segment} /></Tool>
            <Tool><Icon d={ICON.lines3} /></Tool>
            <Tool><Icon d={ICON.lines3b} /></Tool>
            <Tool><Icon d={ICON.hline} /></Tool>
            <Tool><Icon d={ICON.rect} color="#bdbdbd" sw={1.4} /></Tool>
            <Tool>
              <Icon d="M2.5 8h.1M6 8h.1M9.5 8h.1" color="#a8a8a8" sw={1.4} />
              <Dot $x={16} $y={8} />
            </Tool>
            <Spacer $w={6} />
            <Divider $h={13} $color="#2c2f38" />
            <Spacer $w={10} />
            <Tool $color="#d9b04c"><ToolGlyph>主</ToolGlyph></Tool>
            <Tool $color="#d9b04c"><ToolGlyph>大</ToolGlyph></Tool>
            <Tool $color="#d9b04c"><ToolGlyph>筹</ToolGlyph></Tool>
            <Tool $color="#d9b04c"><Icon d={ICON.gauge} sw={1.3} /><Dot $x={16} $y={2} /></Tool>
            <Tool><Icon d={ICON.cycle} /></Tool>
            <Tool><Icon d={ICON.slashes} /></Tool>
            <Spacer $w={8} />
            <Divider $h={13} $color="#3a3424" />
            <Spacer $w={9} />
            <Tool><Icon d={ICON.bookmark} /></Tool>
            <Tool><Icon d={ICON.ruler} /></Tool>
            <Tool><Icon d={ICON.zoom}><circle cx={6.9} cy={6.8} r={5} /></Icon></Tool>
            <Tool>
              <svg width={16} height={16} viewBox="0 0 16 16">
                <path d="M2 13.5 3.2 9 9.3 3 12.8 6.5 6.8 12.6zM10.2 2.2 11.3 1.2q.7-.6 1.4 0L14.6 3.2q.6.7 0 1.3L13.6 5.6z" fill="#fff" />
                <path d="M8.5 13.5q1.5-2.5 3-.8t3 .3" fill="none" stroke="#fff" strokeWidth={1.4} />
              </svg>
            </Tool>
            <Tool><Icon d={ICON.candles + 'M2 2.5 14 13.5'} /></Tool>
            <Tool><Icon d={ICON.lock} /></Tool>
            <Tool><Icon d={ICON.note} /></Tool>
            <Tool $active><Icon d={ICON.magnet} /></Tool>
            <Tool><Icon d={ICON.funnel} /></Tool>
            <Tool><Icon d={ICON.trash} /></Tool>
            <Tool><Icon d={ICON.undo} /></Tool>
            <Tool $color="#4a4a4a"><Icon d={ICON.redo} /></Tool>
          </Bar>

          <ChartArea>
            <Chart />
            <Legend>
              <LegendRow>
                <LegendCell $w={22}><CircleChevron /></LegendCell>
                {OHLC.map(([t, w, red]) => <LegendCell key={t} $w={w} $color={red ? '#c63c3c' : undefined}>{t}</LegendCell>)}
              </LegendRow>
              <LegendRow>
                <LegendCell $w={22}><CircleChevron /></LegendCell>
                <LegendCell $w={14}><Icon w={12} h={13} d={ICON.bell} /></LegendCell>
                <LegendCell $w={27}>MA</LegendCell>
                <LegendCell $w={86} $color="#d2d2d2" $weight={500}>MA(5):1573.47</LegendCell>
                <LegendCell $w={92.5} $color="#f0e52a" $weight={500}>MA(10):1568.83</LegendCell>
                <LegendCell $w={90} $color="#cc3fa8">MA(30):1482.27</LegendCell>
              </LegendRow>
            </Legend>
            <CornerTags><span>筹</span><span>爆</span></CornerTags>
          </ChartArea>

          <Bar $h={29}>
            <Spacer $w={16} />
            <Cell $w={24} $color="#dcdcdc"><Icon d={ICON.calendar} w={17} /></Cell>
            <Cell $w={61} $bold $size={13} $color="#dcdcdc">定位到...</Cell>
            <Divider $h={29} />
            <Spacer $w={17} />
            <Cell $w={57} $bold $size={13} $color="#dcdcdc">日期范围</Cell>
            <Cell $w={27}><Chevron /></Cell>
            <Divider $h={29} />
            <Spacer $w={12} />
            <Pill $w={37} $h={22}>MA</Pill>
            <Spacer $w={20.5} />
            <Cell $w={57.5}>EMA</Cell>
            <Cell $w={64}>BOLL</Cell>
            <Cell $w={46}>TD</Cell>
            <Cell $w={40.5}>BBI</Cell>
            <Cell $w={65}><ChevronRight /></Cell>
            <Divider $h={29} />
            <Spacer $w={19.8} />
            {SUB_INDICATORS.map(([t, w]) => <Cell key={t} $w={w}>{t}</Cell>)}
            <Cell $w={12}><ChevronRight /></Cell>
            <Cell $w={23}><Icon d={ICON.edit} /></Cell>
            <Cell $w={72} $bold>社区指标</Cell>
            <Cell $w={36} $size={13}>对数</Cell>
            <Cell $w={16} $size={13}>%</Cell>
            <Pill $w={34} $h={26} $r={2}>
              <Cell $w={26} $size={13} $bold $color="#fff">自动</Cell>
            </Pill>
          </Bar>

          <Bar $h={30}>
            <Spacer $w={10.5} />
            {ROW_PERIODS.map(([t, w]) => <Cell key={t} $w={w} $color="#dadada">{t}</Cell>)}
            <Pill $w={38} $h={30}>4时</Pill>
            <Spacer $w={16} />
            <Cell $w={46.5} $color="#dadada">8时</Cell>
            <Cell $w={46} $color="#dadada">1日</Cell>
            <Cell $w={40} $color="#dadada">1周</Cell>
            <Icon w={9} h={9} sw={0.9} d="M1.5 1.5l6 6M7.5 1.5l-6 6" />
          </Bar>

          <Splitter />

          <BottomTabs>
            {BOTTOM_TABS.map(([t, w], i) => (
              <React.Fragment key={t}>
                <BottomTab $w={w} $on={i === 0}>{t}</BottomTab>
                {i === 0 && <Spacer $w={17} />}
              </React.Fragment>
            ))}
            <Spacer $w={749} />
            <Icon w={14} h={22} sw={1.3} d="M1.5 20V9.5h11V20" />
          </BottomTabs>
        </Main>
        <SideRail />
        <Handle $x={-5} $y={397} $w={9} $h={38} $r="0 3px 3px 0">
          <svg width={9} height={8} viewBox="0 0 9 8"><path d="M8 1v6L4.5 4z" fill="#b9b9b9" /></svg>
        </Handle>
        <Handle $x={1495} $y={397} $w={8} $h={38} $r="3px">
          <svg width={8} height={8} viewBox="0 0 8 8"><path d="M2 .5v7L6.5 4z" fill="#b9b9b9" /></svg>
        </Handle>
        <Handle $x={731} $y={848} $w={38} $h={8} $r="2px">
          <svg width={8} height={5} viewBox="0 0 8 5"><path d="M0 4.5h8L4 .5z" fill="#b9b9b9" /></svg>
        </Handle>
      </Shell>
    </>
  );
}
